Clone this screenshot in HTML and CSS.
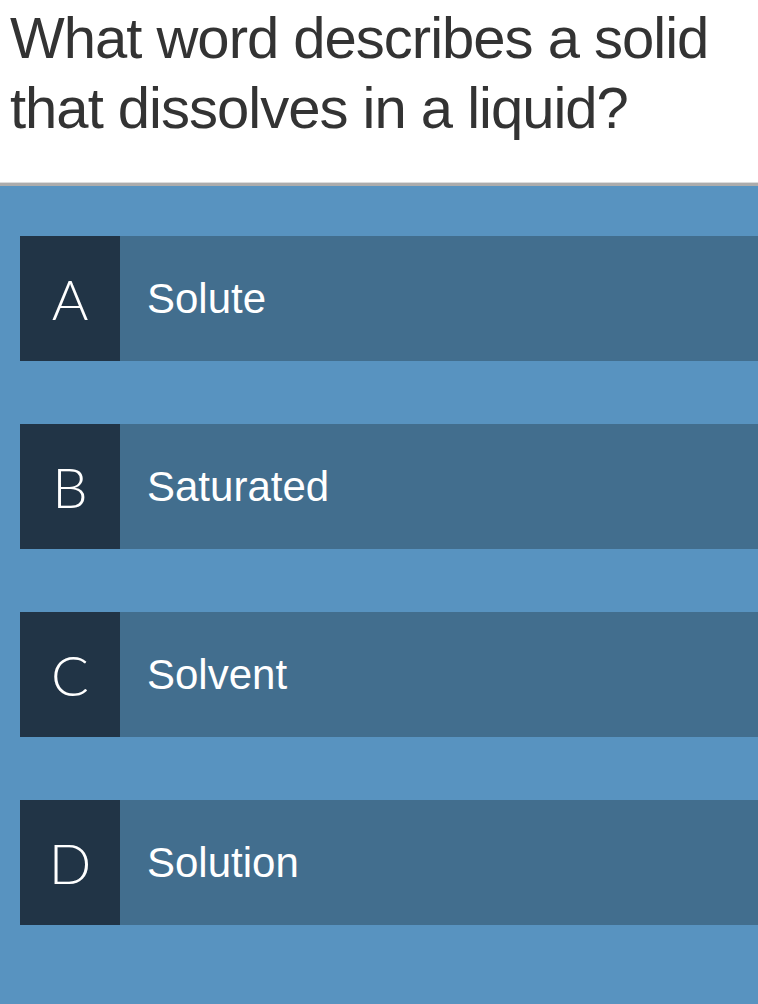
FILE: index.html
```html
<!DOCTYPE html>
<html>
<head>
<meta charset="utf-8">
<link rel="stylesheet" href="styles.css">
</head>
<body>
<header class="question">
  <h1 class="question-text">What word describes a solid that dissolves in a liquid?</h1>
</header>
<main class="answers">
  <div class="option"><div class="letter">A</div><div class="label">Solute</div></div>
  <div class="option"><div class="letter">B</div><div class="label">Saturated</div></div>
  <div class="option"><div class="letter">C</div><div class="label">Solvent</div></div>
  <div class="option"><div class="letter">D</div><div class="label">Solution</div></div>
</main>
</body>
</html>
```

FILE: styles.css
```css
html, body {
  margin: 0;
  padding: 0;
  height: 100%;
}
body {
  font-family: "Liberation Sans", Arial, sans-serif;
  background: #5893c0;
  display: flex;
  flex-direction: column;
}
.question {
  background: #fff;
  box-sizing: border-box;
  height: 186px;
  border-bottom: 3px solid #acacac;
  box-shadow: inset 0 -1px 0 #dcdcdc;
  padding: 3px 0 0 10px;
}
.question-text {
  margin: 0;
  font-size: 58px;
  line-height: 70px;
  letter-spacing: -1px;
  font-weight: normal;
  color: #333;
}
.answers {
  flex: 1;
  background: #5893c0;
  padding: 50px 0 0 20px;
  display: flex;
  flex-direction: column;
  gap: 63px;
}
.option {
  display: flex;
  height: 125px;
  background: #426e8e;
}
.letter {
  width: 100px;
  background: #213446;
  color: #fff;
  font-family: Lato, "Liberation Sans", sans-serif;
  font-weight: 300;
  font-size: 56px;
  display: flex;
  align-items: center;
  justify-content: center;
}
.label {
  display: flex;
  align-items: center;
  padding-left: 27px;
  color: #fff;
  font-size: 42px;
}
```
